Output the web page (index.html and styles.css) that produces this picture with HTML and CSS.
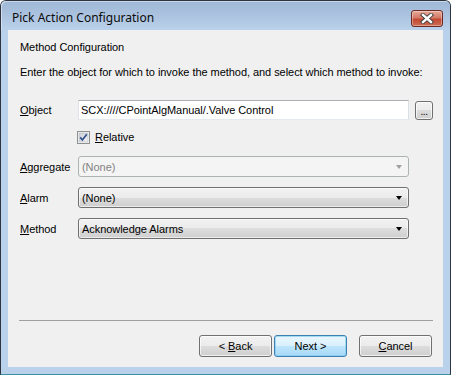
FILE: index.html
```html
<!DOCTYPE html>
<html>
<head>
<meta charset="utf-8">
<link rel="stylesheet" href="styles.css">
</head>
<body>
<div class="window">
  <div class="titlebar">
    <span class="title">Pick Action Configuration</span>
    <div class="close">
      <svg width="16" height="11" viewBox="0 0 16 11">
        <path d="M4 2 L12 9 M12 2 L4 9" stroke="#3b3b3b" stroke-width="4.2" stroke-linecap="square" fill="none"/>
        <path d="M4 2 L12 9 M12 2 L4 9" stroke="#ffffff" stroke-width="2.4" stroke-linecap="square" fill="none"/>
      </svg>
    </div>
  </div>
  <div class="client">
    <div class="form">
      <div class="heading">Method Configuration</div>
      <div class="desc">Enter the object for which to invoke the method, and select which method to invoke:</div>
      <div class="row row-object">
        <label class="lbl"><u>O</u>bject</label>
        <div class="textbox">SCX:////CPointAlgManual/.Valve Control</div>
        <div class="browse">...</div>
      </div>
      <div class="row row-check">
        <span class="check">
          <svg width="13" height="13" viewBox="0 0 13 13">
            <defs>
              <linearGradient id="cb" x1="0" y1="0" x2="1" y2="1">
                <stop offset="0" stop-color="#cbcfd5"/>
                <stop offset="1" stop-color="#f6f6f6"/>
              </linearGradient>
            </defs>
            <rect x="0.5" y="0.5" width="12" height="12" fill="#ffffff" stroke="#8e8f8f"/>
            <rect x="2" y="2" width="9" height="9" fill="url(#cb)" stroke="#a9b0b9" stroke-width="0.6"/>
            <path d="M3.2 6.4 L5.4 9 L9.8 3.2" stroke="#31508a" stroke-width="1.7" fill="none"/>
          </svg>
        </span>
        <span class="checklbl"><u>R</u>elative</span>
      </div>
      <div class="row row-agg">
        <label class="lbl"><u>A</u>ggregate</label>
        <div class="combo disabled"><span>(None)</span><i class="arrow"></i></div>
      </div>
      <div class="row row-combo">
        <label class="lbl"><u>A</u>larm</label>
        <div class="combo"><span>(None)</span><i class="arrow"></i></div>
      </div>
      <div class="row row-combo">
        <label class="lbl"><u>M</u>ethod</label>
        <div class="combo"><span>Acknowledge Alarms</span><i class="arrow"></i></div>
      </div>
    </div>
    <div class="sep"></div>
    <div class="buttons">
      <div class="btn">&lt; <u>B</u>ack</div>
      <div class="btn default">Next &gt;</div>
      <div class="btn cancel"><u>C</u>ancel</div>
    </div>
  </div>
</div>
</body>
</html>
```
FILE: styles.css
```css
html, body {
  margin: 0;
  padding: 0;
  background: #ffffff;
}
.window {
  width: 451px;
  height: 375px;
  box-sizing: border-box;
  border: 1px solid #2e3440;
  border-bottom-color: #3a8fa0;
  border-radius: 6px 6px 0 0;
  background: #b9d1ea;
  display: flex;
  flex-direction: column;
  font-family: "Liberation Sans", Arial, sans-serif;
  font-size: 11px;
  letter-spacing: -0.05px;
  color: #000;
}
.titlebar {
  height: 29px;
  flex: none;
  display: flex;
  align-items: flex-start;
  justify-content: space-between;
  padding: 0 7px 0 11px;
  border-radius: 5px 5px 0 0;
  background: linear-gradient(to bottom, #9fb8d6 0%, #abc3df 50%, #b9d1ea 100%);
  box-shadow: inset 1px 1px 0 rgba(255,255,255,0.45);
}
.title {
  font-family: "Noto Sans", "Open Sans", sans-serif;
  font-size: 12px;
  letter-spacing: 0;
  line-height: 16px;
  margin-top: 9px;
  color: #0b0b0b;
}
.close {
  margin-top: 9px;
  width: 32px;
  height: 17px;
  box-sizing: border-box;
  border: 1px solid #6b2a22;
  border-radius: 3px;
  background: linear-gradient(to bottom, #e9a99a 0%, #d47a68 45%, #c24a34 55%, #cf6c52 100%);
  box-shadow: inset 0 0 0 1px rgba(255,255,255,0.35);
  display: flex;
  align-items: center;
  justify-content: center;
}
.client {
  flex: 1;
  margin: 0 7px 7px 7px;
  background: #f0f0f0;
  display: flex;
  flex-direction: column;
}
.form {
  flex: 1;
  padding: 0 10px 0 12px;
  display: flex;
  flex-direction: column;
}
.heading {
  margin-top: 11px;
  line-height: 13px;
}
.desc {
  margin-top: 12px;
  line-height: 13px;
}
.row {
  display: flex;
  align-items: center;
}
.lbl {
  width: 58px;
  flex: none;
}
.row-object {
  margin-top: 21px;
  height: 20px;
}
.textbox {
  width: 331px;
  height: 20px;
  box-sizing: border-box;
  background: #fff;
  border: 1px solid #e3e9ef;
  border-top-color: #abadb3;
  border-left-color: #e2e3ea;
  border-right-color: #dbdfe6;
  padding: 0 2px;
  line-height: 18px;
  white-space: nowrap;
}
.browse {
  margin-left: 6px;
  width: 18px;
  height: 19px;
  box-sizing: border-box;
  border: 1px solid #707070;
  border-radius: 3px;
  background: linear-gradient(to bottom, #f2f2f2 0%, #ebebeb 50%, #dddddd 50%, #cfcfcf 100%);
  box-shadow: inset 0 0 0 1px rgba(255,255,255,0.7);
  font-size: 10px;
  line-height: 20px;
  text-align: center;
  letter-spacing: -0.5px;
  margin-top: 1px;
}
.row-check {
  margin-top: 11px;
  height: 13px;
  padding-left: 57px;
}
.check {
  width: 13px;
  height: 13px;
  display: block;
}
.check svg { display: block; }
.checklbl {
  margin-left: 5px;
  line-height: 13px;
}
.row-agg {
  margin-top: 12px;
  height: 21px;
}
.row-combo {
  margin-top: 10px;
  height: 21px;
}
.combo {
  width: 331px;
  height: 21px;
  box-sizing: border-box;
  border: 1px solid #707070;
  border-radius: 3px;
  background: linear-gradient(to bottom, #f2f2f2 0%, #ebebeb 50%, #dddddd 50%, #cfcfcf 100%);
  box-shadow: inset 0 0 0 1px rgba(255,255,255,0.6);
  display: flex;
  align-items: center;
  justify-content: space-between;
  padding: 0 6px 0 3px;
}
.combo.disabled {
  background: #f4f4f4;
  border-color: #adb2b5;
  color: #838383;
  box-shadow: none;
}
.arrow {
  width: 0;
  height: 0;
  border-left: 3.5px solid transparent;
  border-right: 3.5px solid transparent;
  border-top: 4px solid #000;
}
.combo.disabled .arrow {
  border-top-color: #a0a0a0;
}
.sep {
  margin: 0 10px 0 11px;
  height: 1px;
  background: #a0a0a0;
  flex: none;
}
.buttons {
  display: flex;
  justify-content: flex-end;
  margin: 14px 11px 10px 0;
}
.btn {
  width: 73px;
  height: 22px;
  box-sizing: border-box;
  border: 1px solid #707070;
  border-radius: 3px;
  background: linear-gradient(to bottom, #f2f2f2 0%, #ebebeb 50%, #dddddd 50%, #cfcfcf 100%);
  box-shadow: inset 0 0 0 1px rgba(255,255,255,0.7);
  text-align: center;
  line-height: 20px;
}
.btn.default {
  margin-left: 2px;
  border-color: #3c7fb1;
  background: linear-gradient(to bottom, #eaf6fd 0%, #d9f0fc 50%, #bee6fd 50%, #a7d9f5 100%);
  box-shadow: inset 0 0 0 1px rgba(120,200,240,0.6);
}
.btn.cancel {
  margin-left: 12px;
}
```
